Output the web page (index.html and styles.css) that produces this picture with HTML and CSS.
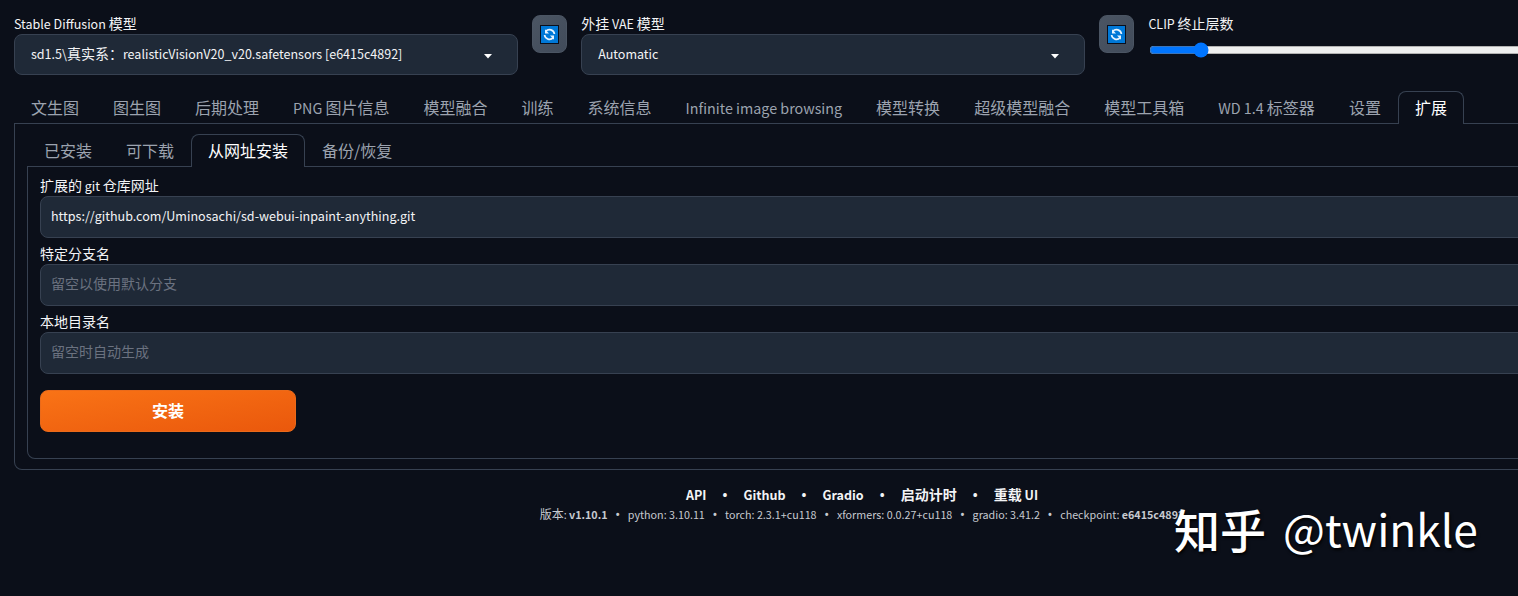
FILE: index.html
```
<!DOCTYPE html>
<html lang="zh-CN">
<head>
  <meta charset="UTF-8" />
  <meta name="viewport" content="width=device-width, initial-scale=1.0" />
  <title>Stable Diffusion</title>
  <link rel="stylesheet" href="styles.css">
</head>
<body>
  <div class="app">
    <div class="quicksettings">
      <div class="setting">
        <span class="label"><span class="en">Stable Diffusion </span>模型</span>
        <div class="dropdown">
          <span class="value"><span class="en">sd1.5\</span>真实系：<span class="en">realisticVisionV20_v20.safetensors [e6415c4892]</span></span>
          <svg class="arrow" viewBox="0 0 8 5"><path d="M0 0h8L4 4.5z" fill="#fff" /></svg>
        </div>
      </div>
      <button class="refresh">
        <svg viewBox="0 0 19 19">
          <rect x="0.5" y="0.5" width="18" height="18" fill="#0078d7" stroke="#0a0f1c" />
          <path d="M4.6 10a4.9 4.9 0 0 0 8.6 2.6M14.4 9a4.9 4.9 0 0 0-8.6-2.6" fill="none" stroke="#e8f4ff" stroke-width="1.7" />
          <path d="M5 4.2v4.2h4zM14 14.8v-4.2h-4z" fill="#e8f4ff" />
        </svg>
      </button>
      <div class="setting">
        <span class="label">外挂<span class="en"> VAE </span>模型</span>
        <div class="dropdown">
          <span class="value"><span class="en">Automatic</span></span>
          <svg class="arrow" viewBox="0 0 8 5"><path d="M0 0h8L4 4.5z" fill="#fff" /></svg>
        </div>
      </div>
      <button class="refresh">
        <svg viewBox="0 0 19 19">
          <rect x="0.5" y="0.5" width="18" height="18" fill="#0078d7" stroke="#0a0f1c" />
          <path d="M4.6 10a4.9 4.9 0 0 0 8.6 2.6M14.4 9a4.9 4.9 0 0 0-8.6-2.6" fill="none" stroke="#e8f4ff" stroke-width="1.7" />
          <path d="M5 4.2v4.2h4zM14 14.8v-4.2h-4z" fill="#e8f4ff" />
        </svg>
      </button>
      <div class="setting">
        <span class="label"><span class="en">CLIP </span>终止层数</span>
        <input type="range" class="slider" min="1" max="12" value="2" />
      </div>
    </div>

    <div class="tab-nav">
      <button>文生图</button>
      <button>图生图</button>
      <button>后期处理</button>
      <button><span class="en">PNG </span>图片信息</button>
      <button>模型融合</button>
      <button>训练</button>
      <button>系统信息</button>
      <button><span class="en">Infinite image browsing</span></button>
      <button>模型转换</button>
      <button>超级模型融合</button>
      <button>模型工具箱</button>
      <button><span class="en">WD 1.4 </span>标签器</button>
      <button>设置</button>
      <button class="selected">扩展</button>
    </div>
    <div class="tabitem">
      <div class="tab-nav">
        <button>已安装</button>
        <button>可下载</button>
        <button class="selected">从网址安装</button>
        <button>备份/恢复</button>
      </div>
      <div class="tabitem install-form">
        <label class="field">
          <span class="label">扩展的<span class="en"> git </span>仓库网址</span>
          <input type="text" class="url" value="https://github.com/Uminosachi/sd-webui-inpaint-anything.git" />
        </label>
        <label class="field">
          <span class="label">特定分支名</span>
          <input type="text" placeholder="留空以使用默认分支" />
        </label>
        <label class="field">
          <span class="label">本地目录名</span>
          <input type="text" placeholder="留空时自动生成" />
        </label>
        <button class="primary">安装</button>
      </div>
    </div>

    <footer>
      <div class="links">
        <a class="en">API</a><i>•</i><a class="en">Github</a><i>•</i><a class="en">Gradio</a><i>•</i><a>启动计时</a><i>•</i><a>重载<span class="en"> UI</span></a>
      </div>
      <div class="versions">
        <span>版本<span class="en">: <b>v1.10.1</b></span></span><i>•</i><span class="en">python: 3.10.11</span><i>•</i><span class="en">torch: 2.3.1+cu118</span><i>•</i><span class="en">xformers: 0.0.27+cu118</span><i>•</i><span class="en">gradio: 3.41.2</span><i>•</i><span class="en">checkpoint: <b>e6415c4892</b></span>
      </div>
    </footer>
  </div>
  <div class="watermark"><b>知乎</b><span>@twinkle</span></div>
</body>
</html>
```

FILE: styles.css
```
* {
  margin: 0;
  padding: 0;
  box-sizing: border-box;
}
html, body {
  height: 100%;
  overflow: hidden;
}
body {
  position: relative;
  background-color: #0b0f19;
  color: #f3f4f6;
  font-family: "Noto Sans CJK SC", sans-serif;
  font-size: 14px;
}
button, input {
  font-family: inherit;
}
/* latin glyphs run large next to the chinese ones */
.en {
  font-size: 0.895em;
}
i {
  display: inline-block;
  font-family: "Noto Sans", sans-serif;
  font-style: normal;
  text-align: center;
}
.app {
  width: 1724px;
  padding: 15px 14px 0;
}
.quicksettings {
  display: flex;
  gap: 14px;
  height: 76px;
}
.setting {
  width: 504.2px;
}
.label {
  display: block;
  height: 19px;
  line-height: 17px;
  font-size: 14px;
  white-space: nowrap;
}
.dropdown {
  display: flex;
  align-items: center;
  justify-content: space-between;
  height: 41px;
  padding: 0 25.5px 0 16px;
  border: 1px solid #374151;
  border-radius: 8px;
  background-color: #1f2937;
}
.value {
  padding-bottom: 3px;
  font-size: 14px;
  white-space: nowrap;
}
.arrow {
  width: 8px;
  height: 5px;
  margin-top: 3px;
}
.refresh {
  display: flex;
  align-items: center;
  justify-content: center;
  width: 35px;
  height: 38px;
  border: 1px solid #4b5563;
  border-radius: 8px;
  background: linear-gradient(to bottom right, #4b5563, #414b5a);
}
.refresh svg {
  width: 19px;
  height: 19px;
}
.slider {
  display: block;
  width: 504px;
  height: 16px;
  margin-top: 8px;
  margin-left: 0.4px;
  accent-color: #0075ff;
}
.tab-nav {
  display: flex;
  position: relative;
  height: 33px;
  border-bottom: 1px solid #374151;
}
.tab-nav button {
  height: 33px;
  padding: 0 16px 2px;
  border: 1px solid transparent;
  border-bottom: none;
  border-radius: 8px 8px 0 0;
  background: transparent;
  color: #9ca3af;
  font-size: 16px;
  line-height: 29px;
  white-space: nowrap;
}
.tab-nav button.selected {
  border-color: #374151;
  background-color: #0b0f19;
  color: #fff;
}
.tabitem {
  padding: 10px 12px;
  border: 1px solid #374151;
  border-top: none;
  border-radius: 0 0 8px 8px;
}
.install-form {
  display: flex;
  flex-direction: column;
  gap: 8px;
  height: 292px;
  padding: 11px 12px;
}
.field {
  display: block;
}
.field .label {
  height: 18px;
  line-height: 15px;
}
.field input {
  display: block;
  width: 100%;
  height: 42px;
  padding: 0 10px 4px;
  border: 1px solid #374151;
  border-radius: 8px;
  background-color: #1f2937;
  color: #f3f4f6;
  font-size: 14px;
}
.field input.url {
  padding-bottom: 3px;
  font-size: 12.55px;
}
.field input::placeholder {
  color: #6b7280;
}
.primary {
  width: 256px;
  height: 42px;
  margin-top: 8px;
  padding-bottom: 3px;
  border: 1px solid #ea6a1a;
  border-radius: 8px;
  background: linear-gradient(to bottom right, #f97316, #ea580c);
  color: #fff;
  font-size: 16px;
  font-weight: 700;
}
footer {
  display: flex;
  flex-direction: column;
  align-items: center;
  padding-top: 14px;
  white-space: nowrap;
}
.links {
  height: 20px;
  line-height: 20px;
  font-size: 14px;
  font-weight: 700;
}
.links i {
  width: 37px;
  font-size: 13px;
}
.versions {
  height: 19px;
  line-height: 19px;
  font-size: 12px;
  color: #c7cad0;
}
.versions i {
  width: 20.3px;
  font-size: 13px;
}
.watermark {
  display: flex;
  align-items: center;
  gap: 17px;
  position: absolute;
  left: 1174px;
  top: 493px;
  height: 70px;
  color: #fff;
  font-size: 44.3px;
  line-height: 70px;
  text-shadow: 1px 2px 3px #000;
}
.watermark b {
  font-size: 46px;
  font-weight: 500;
}
```
